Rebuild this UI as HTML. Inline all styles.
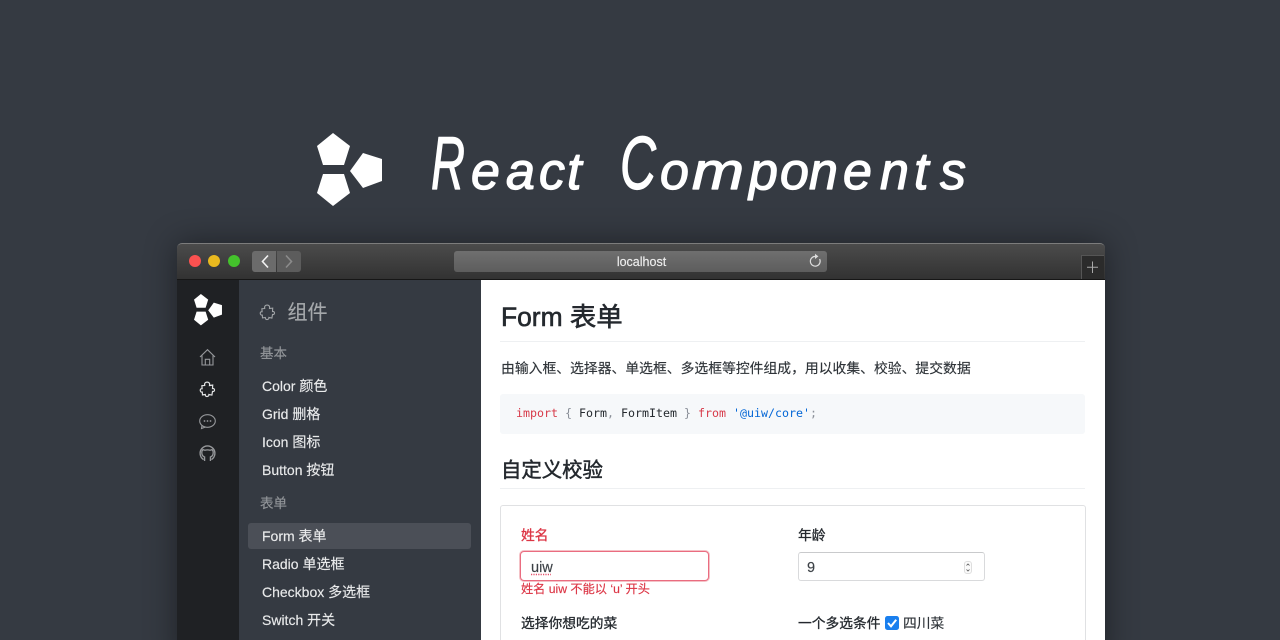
<!DOCTYPE html>
<html lang="zh">
<head>
<meta charset="utf-8">
<title>React Components</title>
<style>
html,body{margin:0;padding:0;width:1280px;height:640px;overflow:hidden;background:#353a42}
body{position:relative;font-family:"Liberation Sans","Noto Sans CJK SC",sans-serif}
.t{position:absolute;line-height:20px;height:20px;white-space:nowrap;-webkit-text-stroke:.15px currentColor}
.b{position:absolute;box-sizing:border-box}
.side{color:#e9eaeb;font-size:14px;left:262px}
.cap{color:#93969a;font-size:13.5px;left:260px}
.lab{color:#24292e;font-size:13.75px;-webkit-text-stroke:.3px currentColor}
svg{position:absolute;left:0;top:0}
</style>
</head>
<body>
<!-- window -->
<div class="b" style="left:177px;top:243px;width:928px;height:420px;border-radius:5px 5px 0 0;box-shadow:0 0 32px rgba(0,0,0,.42)"></div>
<div class="b" style="left:177px;top:243px;width:928px;height:37px;border-radius:5px 5px 0 0;background:linear-gradient(#4b4b4b,#323232);border-top:1px solid #7c7c7c;border-bottom:1px solid #161616"></div>
<div class="b" style="left:177px;top:280px;width:62px;height:360px;background:#1f2124"></div>
<div class="b" style="left:239px;top:280px;width:242px;height:360px;background:#353a42"></div>
<div class="b" style="left:481px;top:280px;width:624px;height:360px;background:#fff"></div>
<!-- traffic lights -->
<div class="b" style="left:189px;top:255px;width:12px;height:12px;border-radius:50%;background:#fb5150"></div>
<div class="b" style="left:208px;top:255px;width:12px;height:12px;border-radius:50%;background:#e9b91f"></div>
<div class="b" style="left:228px;top:255px;width:12px;height:12px;border-radius:50%;background:#44c22c"></div>
<!-- nav buttons -->
<div class="b" style="left:252px;top:251px;width:24px;height:21px;border-radius:3px 0 0 3px;background:#6b6b6b"></div>
<div class="b" style="left:277px;top:251px;width:24px;height:21px;border-radius:0 3px 3px 0;background:#5c5c5c"></div>
<!-- url bar -->
<div class="b" style="left:454px;top:251px;width:373px;height:21px;border-radius:3px;background:linear-gradient(#6f6f6f,#5d5d5d)"></div>
<div class="t" style="left:455px;width:373px;top:252px;text-align:center;color:#eee;font-size:12.5px">localhost</div>
<!-- new tab -->
<div class="b" style="left:1081px;top:255px;width:23px;height:24px;background:#2b2b2b;border-left:1px solid #555;border-top:1px solid #555"></div>

<svg width="1280" height="640" viewBox="0 0 1280 640" fill="none">
  <!-- big logo -->
  <g fill="#fff">
    <polygon points="333,133 350,146 344,165 323,165 317,146"/>
    <polygon points="323,174 344,174 350,193 333,206 317,193"/>
    <polygon points="350,171 363,153 382,159 382,181 363,188"/>
  </g>
  <!-- title -->
  <text fill="#fff" stroke="#fff" stroke-width="1.2" stroke-linejoin="round" font-family="Liberation Sans, sans-serif" font-style="italic" font-size="52"><tspan x="431" y="189" font-size="75" textLength="34" lengthAdjust="spacingAndGlyphs">R</tspan><tspan x="471 506 539 567 600" y="189">eact </tspan><tspan x="620" y="189" font-size="75" textLength="36" lengthAdjust="spacingAndGlyphs">C</tspan><tspan x="660" y="189">o</tspan><tspan x="692" y="189" textLength="52" lengthAdjust="spacingAndGlyphs">m</tspan><tspan x="749 780 809 843 880 914 940" y="189">ponents</tspan></text>
  <!-- small logo -->
  <g fill="#fff" transform="translate(57.7 236.8) scale(.43)">
    <polygon points="333,133 350,146 344,165 323,165 317,146"/>
    <polygon points="323,174 344,174 350,193 333,206 317,193"/>
    <polygon points="350,171 363,153 382,159 382,181 363,188"/>
  </g>
  <!-- nav chevrons -->
  <path d="M268 255.5 L262.5 261.5 L268 267.5" stroke="#f2f2f2" stroke-width="1.6"/>
  <path d="M286 255.5 L291.5 261.5 L286 267.5" stroke="#8b8b8b" stroke-width="1.6"/>
  <!-- reload -->
  <path d="M819.6 259 A4.9 4.9 0 1 1 815.6 256.4" stroke="#ddd" stroke-width="1.2"/>
  <path d="M815 253.8 L818.4 256.4 L815 259 Z" fill="#ddd"/>
  <!-- plus -->
  <path d="M1092.5 261.5 V273 M1087 267.2 H1098" stroke="#a8a8a8" stroke-width="1"/>
  <!-- rail icons -->
  <g stroke="#96989b" stroke-width="1.1">
    <path d="M200 357 L207.5 349.7 L215 357 M202 355.5 V365 H213 V355.5 M205.3 365 V359.3 H209.7 V365"/>
    <ellipse cx="207.5" cy="421" rx="7.8" ry="6.3"/>
    <path d="M202 425.5 L201.5 428.5 L205.5 427"/>
    <path stroke-width="1.4" d="M203.6 459.6 A7.4 7.4 0 1 1 211.4 459.6"/>
    <path stroke-width="1.3" d="M204.6 461 V457 Q201.8 456 201.8 452.6 Q201.8 451 203 449.6 L204.8 450.2 Q207.5 449.5 210.2 450.2 L212 449.6 Q213.2 451 213.2 452.6 Q213.2 456 210.4 457 V461"/>
  </g>
  <g fill="#96989b">
    <circle cx="204.5" cy="421" r=".9"/><circle cx="207.5" cy="421" r=".9"/><circle cx="210.5" cy="421" r=".9"/>
  </g>
  <path transform="translate(199.5 381.5)" stroke="#e2e3e4" stroke-width="1.2" d="M5.2 4 C4.6 1.2 6.4 .6 7.6 .6 C9.2 .6 10.6 1.6 10 4 L13.2 3.6 L13 7 C15.6 6.4 15.8 10.6 13 10 L12.4 13.6 L9.4 13 C9.8 15.6 5.4 15.8 5.8 13 L3 13.4 L2.8 10.6 C.4 11.2 -.2 6.8 2.6 7.2 L2.4 4.2 Z"/>
  <path transform="translate(259.5 304.5)" stroke="#a2a5a8" stroke-width="1.1" d="M5.2 4 C4.6 1.2 6.4 .6 7.6 .6 C9.2 .6 10.6 1.6 10 4 L13.2 3.6 L13 7 C15.6 6.4 15.8 10.6 13 10 L12.4 13.6 L9.4 13 C9.8 15.6 5.4 15.8 5.8 13 L3 13.4 L2.8 10.6 C.4 11.2 -.2 6.8 2.6 7.2 L2.4 4.2 Z"/>
</svg>

<!-- sidebar -->
<div class="t" style="left:287.5px;top:303px;font-size:20px;color:#a5a8ab">组件</div>
<div class="t cap" style="top:344px">基本</div>
<div class="t side" style="top:376px">Color 颜色</div>
<div class="t side" style="top:404px">Grid 删格</div>
<div class="t side" style="top:432px">Icon 图标</div>
<div class="t side" style="top:460px">Button 按钮</div>
<div class="t cap" style="top:494px">表单</div>
<div class="b" style="left:248px;top:523px;width:223px;height:26px;border-radius:3px;background:#4b4f57"></div>
<div class="t side" style="top:526px">Form 表单</div>
<div class="t side" style="top:554px">Radio 单选框</div>
<div class="t side" style="top:582px">Checkbox 多选框</div>
<div class="t side" style="top:610px">Switch 开关</div>

<!-- content -->
<div class="t" style="left:501px;top:307px;font-size:26.4px;-webkit-text-stroke:.6px #24292e;color:#24292e">Form 表单</div>
<div class="b" style="left:500px;top:341px;width:585px;height:1px;background:#eef0f2"></div>
<div class="t" style="left:501px;top:358px;font-size:13.82px;color:#2f3439">由输入框、选择器、单选框、多选框等控件组成，用以收集、校验、提交数据</div>
<div class="b" style="left:500px;top:394px;width:585px;height:40px;border-radius:3px;background:#f6f8fa"></div>
<div class="t" style="left:516px;top:403px;font-family:'DejaVu Sans Mono','Liberation Mono',monospace;font-size:11.63px;color:#24292e;-webkit-text-stroke:0"><span style="color:#d73a49">import</span> <span style="color:#8a8f98">{</span> Form<span style="color:#8a8f98">,</span> FormItem <span style="color:#8a8f98">}</span> <span style="color:#d73a49">from</span> <span style="color:#0366d6">'@uiw/core'</span><span style="color:#8a8f98">;</span></div>
<div class="t" style="left:501px;top:461px;font-size:20.4px;-webkit-text-stroke:.5px #24292e;color:#24292e">自定义校验</div>
<div class="b" style="left:500px;top:488px;width:585px;height:1px;background:#eef0f2"></div>

<!-- card -->
<div class="b" style="left:500px;top:505px;width:586px;height:160px;border:1.5px solid #e0e1e3;border-radius:3px;background:#fff"></div>
<div class="t lab" style="left:521px;top:526px;color:#dc3545">姓名</div>
<div class="b" style="left:520px;top:551px;width:189px;height:30px;border:1px solid #ea6c80;border-radius:4px;box-shadow:0 0 0 1px rgba(220,53,69,.3);background:#fff"></div>
<div class="t" style="left:531px;top:557.5px;font-size:14.5px;color:#3c4146">uiw</div>
<svg width="1280" height="640" viewBox="0 0 1280 640" fill="none"><path d="M531 574.5 H551" stroke="#e5506a" stroke-width="1.5" stroke-dasharray="1.2 1.2"/></svg>
<div class="t" style="left:521px;top:579px;font-size:12.2px;color:#dc3545">姓名 uiw 不能以 ‘u’ 开头</div>
<div class="t lab" style="left:521px;top:613.5px">选择你想吃的菜</div>

<div class="t lab" style="left:798px;top:526px">年龄</div>
<div class="b" style="left:798px;top:552px;width:187px;height:29px;border:1px solid #d9dadc;border-top-color:#c9cacc;border-radius:3px;background:#fff"></div>
<div class="t" style="left:807px;top:557.5px;font-size:14.5px;color:#3c4146">9</div>
<div class="b" style="left:964px;top:561px;width:8px;height:13px;border:1px solid #dedede;border-radius:3px;background:#fbfbfb"></div>
<svg width="1280" height="640" viewBox="0 0 1280 640" fill="none"><path d="M966.5 565.5 L968 564 L969.5 565.5 M966.5 569.5 L968 571 L969.5 569.5" stroke="#555" stroke-width=".8"/></svg>
<div class="t lab" style="left:798px;top:613.5px">一个多选条件</div>
<div class="b" style="left:885px;top:616px;width:14px;height:14px;border-radius:2.5px;background:#1a7fee"></div>
<svg width="1280" height="640" viewBox="0 0 1280 640" fill="none"><path d="M888 623 L891 626.3 L896.2 619.8" stroke="#fff" stroke-width="2"/></svg>
<div class="t" style="left:903px;top:613.5px;font-size:13.75px;color:#2f3439">四川菜</div>
</body>
</html>
